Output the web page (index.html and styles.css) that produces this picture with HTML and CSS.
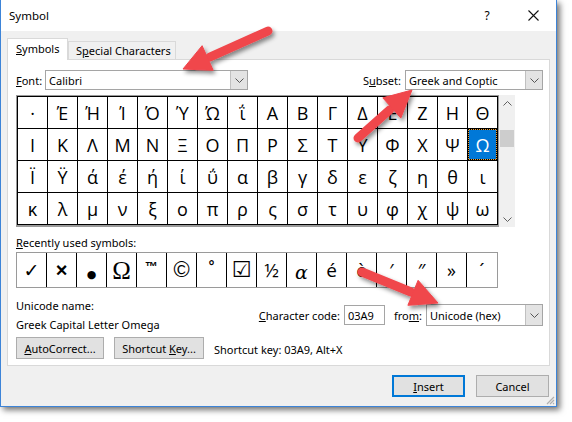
FILE: index.html
```html
<!DOCTYPE html>
<html>
<head>
<meta charset="utf-8">
<title>Symbol</title>
<link rel="stylesheet" href="styles.css">
</head>
<body>
<div class="window">
  <div class="titlebar">
    <span class="title">Symbol</span>
    <span class="tbtn help">?</span>
    <span class="tbtn close"><svg width="11" height="11" viewBox="0 0 11 11"><path d="M0.5 0.5L10.5 10.5M10.5 0.5L0.5 10.5" stroke="#111" stroke-width="1.1" fill="none"/></svg></span>
  </div>
  <div class="client">
    <div class="tabs">
      <div class="tab active"><span><u>S</u>ymbols</span></div>
      <div class="tab inactive"><span>S<u>p</u>ecial Characters</span></div>
    </div>
    <div class="panel">
      <div class="top-row">
        <span class="lbl"><u>F</u>ont:</span>
        <div class="combo font-combo"><span class="val">Calibri</span><span class="drop"><svg width="9" height="5" viewBox="0 0 9 5"><path d="M0.5 0.5L4.5 4.5L8.5 0.5" stroke="#555" fill="none"/></svg></span></div>
        <span class="spacer"></span>
        <span class="lbl">S<u>u</u>bset:</span>
        <div class="combo subset-combo"><span class="val">Greek and Coptic</span><span class="drop"><svg width="9" height="5" viewBox="0 0 9 5"><path d="M0.5 0.5L4.5 4.5L8.5 0.5" stroke="#555" fill="none"/></svg></span></div>
      </div>
      <div class="map-row">
        <div class="charmap">
          <div class="cells">
            <div class="cell">·</div><div class="cell">Έ</div><div class="cell">Ή</div><div class="cell">Ί</div><div class="cell">Ό</div><div class="cell">Ύ</div><div class="cell">Ώ</div><div class="cell">ΐ</div><div class="cell">Α</div><div class="cell">Β</div><div class="cell">Γ</div><div class="cell">Δ</div><div class="cell">Ε</div><div class="cell">Ζ</div><div class="cell">Η</div><div class="cell">Θ</div>
            <div class="cell">Ι</div><div class="cell">Κ</div><div class="cell">Λ</div><div class="cell">Μ</div><div class="cell">Ν</div><div class="cell">Ξ</div><div class="cell">Ο</div><div class="cell">Π</div><div class="cell">Ρ</div><div class="cell">Σ</div><div class="cell">Τ</div><div class="cell">Υ</div><div class="cell">Φ</div><div class="cell">Χ</div><div class="cell">Ψ</div><div class="cell selected">Ω</div>
            <div class="cell">Ϊ</div><div class="cell">Ϋ</div><div class="cell">ά</div><div class="cell">έ</div><div class="cell">ή</div><div class="cell">ί</div><div class="cell">ΰ</div><div class="cell">α</div><div class="cell">β</div><div class="cell">γ</div><div class="cell">δ</div><div class="cell">ε</div><div class="cell">ζ</div><div class="cell">η</div><div class="cell">θ</div><div class="cell">ι</div>
            <div class="cell">κ</div><div class="cell">λ</div><div class="cell">μ</div><div class="cell">ν</div><div class="cell">ξ</div><div class="cell">ο</div><div class="cell">π</div><div class="cell">ρ</div><div class="cell">ς</div><div class="cell">σ</div><div class="cell">τ</div><div class="cell">υ</div><div class="cell">φ</div><div class="cell">χ</div><div class="cell">ψ</div><div class="cell">ω</div>
          </div>
        </div>
        <div class="scrollbar">
          <span class="sb-arrow"><svg width="9" height="5" viewBox="0 0 9 5"><path d="M0.5 4.5L4.5 0.5L8.5 4.5" stroke="#606060" fill="none"/></svg></span>
          <span class="sb-track"><span class="sb-thumb"></span></span>
          <span class="sb-arrow"><svg width="9" height="5" viewBox="0 0 9 5"><path d="M0.5 0.5L4.5 4.5L8.5 0.5" stroke="#606060" fill="none"/></svg></span>
        </div>
      </div>
      <div class="recent-label"><u>R</u>ecently used symbols:</div>
      <div class="recent">
        <div class="rc sym-check">✓</div>
        <div class="rc sym-x">×</div>
        <div class="rc sym-dot">●</div>
        <div class="rc sym-omega">Ω</div>
        <div class="rc sym-tm">™</div>
        <div class="rc sym-copy">©</div>
        <div class="rc sym-deg">°</div>
        <div class="rc sym-box">☑</div>
        <div class="rc sym-half">½</div>
        <div class="rc sym-alpha">α</div>
        <div class="rc sym-e">é</div>
        <div class="rc sym-e">è</div>
        <div class="rc sym-prime">′</div>
        <div class="rc sym-prime">″</div>
        <div class="rc sym-raquo">»</div>
        <div class="rc sym-prime last">´</div>
      </div>
      <div class="info-row">
        <div class="uname">
          <div>Unicode name:</div>
          <div>Greek Capital Letter Omega</div>
        </div>
        <div class="code-group">
          <span class="lbl"><u>C</u>haracter code:</span>
          <div class="textbox">03A9</div>
          <span class="lbl from-lbl">fro<u>m</u>:</span>
          <div class="combo from-combo"><span class="val">Unicode (hex)</span><span class="drop"><svg width="9" height="5" viewBox="0 0 9 5"><path d="M0.5 0.5L4.5 4.5L8.5 0.5" stroke="#555" fill="none"/></svg></span></div>
        </div>
      </div>
      <div class="btn-row">
        <div class="btn auto-btn"><span><u>A</u>utoCorrect...</span></div>
        <div class="btn key-btn"><span>Shortcut <u>K</u>ey...</span></div>
        <span class="shortcut">Shortcut key: 03A9, Alt+X</span>
      </div>
    </div>
    <div class="footer">
      <div class="btn dlg-btn default"><span><u>I</u>nsert</span></div>
      <div class="btn dlg-btn"><span>Cancel</span></div>
    </div>
    <svg class="grip" width="10" height="10" viewBox="0 0 10 10"><path d="M9 2L2 9M9 5L5 9M9 8L8 9" stroke="#b0b0b0" stroke-width="1.2"/></svg>
  </div>
</div>
<svg class="arrows" width="572" height="422" viewBox="0 0 572 422">
  <defs>
    <filter id="sh" x="-20%" y="-20%" width="140%" height="140%">
      <feDropShadow dx="2" dy="3" stdDeviation="2" flood-color="#000" flood-opacity="0.45"/>
    </filter>
  </defs>
  <g filter="url(#sh)" fill="#f0464c" stroke="#f0464c">
    <line x1="268" y1="31" x2="210" y2="57" stroke-width="9" stroke-linecap="round"/>
    <polygon points="183,69 213.2,70.3 202.1,45.7" stroke-width="1" stroke-linejoin="round"/>
    <line x1="358" y1="138" x2="389.5" y2="110" stroke-width="9" stroke-linecap="round"/>
    <polygon points="412,90 400.8,118.05 382.8,97.85" stroke-width="1" stroke-linejoin="round"/>
    <line x1="362" y1="272" x2="411" y2="292" stroke-width="9" stroke-linecap="round"/>
    <polygon points="438,303 407.9,305.3 418.1,280.3" stroke-width="1" stroke-linejoin="round"/>
  </g>
</svg>
</body>
</html>
```

FILE: styles.css
```css
* { box-sizing: border-box; }
html, body { margin: 0; padding: 0; background: #fff; }
body {
  width: 572px;
  height: 422px;
  overflow: hidden;
  position: relative;
  font-family: "Noto Sans", "Open Sans", sans-serif;
  font-size: 11px;
  color: #000;
}
u { text-decoration: underline; text-underline-offset: 1px; }

.window {
  width: 557px;
  height: 407px;
  border: 1px solid #3d84d8;
  border-top: none;
  background: #f0f0f0;
  box-shadow: 3px 3px 6px rgba(0, 0, 0, 0.55);
  display: flex;
  flex-direction: column;
}
.titlebar {
  height: 31px;
  background: #fff;
  display: flex;
  align-items: center;
  flex-shrink: 0;
}
.title { flex: 1; padding-left: 8px; font-size: 11.5px; }
.tbtn {
  width: 46px;
  height: 31px;
  display: flex;
  align-items: center;
  justify-content: center;
}
.help { font-size: 12px; }

.client {
  flex: 1;
  padding: 7px 6px 0 6px;
  display: flex;
  flex-direction: column;
  position: relative;
}
.tabs {
  display: flex;
  align-items: flex-start;
  height: 22px;
  margin-bottom: -1px;
  position: relative;
  z-index: 1;
}
.tab {
  border: 1px solid #d9d9d9;
  border-bottom: none;
  display: flex;
  align-items: center;
  white-space: nowrap;
}
.tab.active {
  width: 61px;
  height: 22px;
  background: #fff;
  padding-left: 8px;
  padding-bottom: 2px;
}
.tab.inactive {
  width: 108px;
  height: 18px;
  margin-top: 3px;
  background: #f0f0f0;
  padding-left: 7px;
}

.panel {
  background: #fff;
  border: 1px solid #d9d9d9;
  padding: 10px 6px 6px 8px;
  display: flex;
  flex-direction: column;
}
.top-row {
  height: 20px;
  display: flex;
  align-items: center;
}
.lbl { white-space: nowrap; }
.spacer { flex: 1; }
.combo {
  height: 20px;
  border: 1px solid #a5a5a5;
  background: #fff;
  display: flex;
  align-items: stretch;
}
.combo .val {
  flex: 1;
  display: flex;
  align-items: center;
  padding-left: 3px;
  white-space: nowrap;
}
.combo .drop {
  width: 17px;
  background: #e3e3e3;
  border-left: 1px solid #c0c0c0;
  display: flex;
  align-items: center;
  justify-content: center;
}
.font-combo { width: 203px; margin-left: 3px; }
.subset-combo { width: 138px; margin-left: 4px; }

.map-row {
  display: flex;
  margin-top: 5px;
}
.charmap {
  border: 1px solid #9a9a9a;
  border-bottom-width: 2px;
}
.cells {
  display: grid;
  grid-template-columns: repeat(16, 29px);
  grid-auto-rows: 31px;
  gap: 1px;
  padding: 1px;
  background: #000;
}
.cell {
  background: #fff;
  display: flex;
  align-items: center;
  justify-content: center;
  font-family: "Open Sans", "Noto Sans", sans-serif;
  font-size: 18px;
  line-height: 1;
}
.cell.selected {
  background: #0078d7;
  color: #fff;
  box-shadow: inset 0 0 0 1px #f0a030;
  outline: 1px dotted #000;
  outline-offset: -1px;
}
.scrollbar {
  width: 16px;
  background: #f0f0f0;
  display: flex;
  flex-direction: column;
}
.sb-arrow {
  height: 16px;
  display: flex;
  align-items: center;
  justify-content: center;
}
.sb-track {
  flex: 1;
  padding: 19px 1px 0 1px;
}
.sb-thumb {
  display: block;
  height: 17px;
  background: #cdcdcd;
}

.recent-label {
  margin-top: 8px;
  height: 16px;
  line-height: 16px;
}
.recent {
  margin-top: 1px;
  width: 482px;
  height: 36px;
  border: 1px solid #9a9a9a;
  display: flex;
}
.rc {
  width: 30px;
  border-right: 1px solid #000;
  display: flex;
  align-items: center;
  justify-content: center;
  font-family: "DejaVu Sans", sans-serif;
  font-size: 18px;
  line-height: 1;
}
.rc.last { border-right: none; flex: 1; }
.sym-check { font-size: 19px; }
.sym-x { font-size: 20px; font-weight: bold; font-family: "Liberation Sans", sans-serif; }
.sym-dot { font-size: 11px; padding-top: 9px; }
.sym-omega { font-family: "Liberation Serif", serif; font-size: 25px; }
.sym-tm { font-size: 13px; font-weight: bold; padding-bottom: 8px; font-family: "Liberation Sans", sans-serif; }
.sym-copy { font-size: 22px; font-family: "Liberation Sans", sans-serif; }
.sym-deg { font-size: 15px; padding-bottom: 9px; font-family: "Liberation Sans", sans-serif; font-weight: bold; }
.sym-box { font-size: 22px; }
.sym-half { font-size: 19px; font-family: "Open Sans", sans-serif; }
.sym-alpha { font-family: "DejaVu Serif", serif; font-style: italic; font-size: 19px; padding-top: 4px; }
.sym-e { font-family: "Open Sans", sans-serif; font-size: 19px; }
.sym-prime { font-family: "Open Sans", sans-serif; font-size: 19px; }
.sym-raquo { font-family: "Open Sans", sans-serif; font-size: 18px; }

.info-row {
  margin-top: 8px;
  height: 38px;
  display: flex;
  align-items: center;
  justify-content: space-between;
}
.uname div { height: 19px; line-height: 19px; }
.code-group {
  display: flex;
  align-items: center;
}
.textbox {
  width: 41px;
  height: 20px;
  border: 1px solid #a5a5a5;
  margin-left: 4px;
  padding-left: 3px;
  display: flex;
  align-items: center;
}
.from-lbl { margin-left: 9px; }
.from-combo { width: 117px; height: 22px; margin-left: 4px; }

.btn-row {
  margin-top: 3px;
  display: flex;
  align-items: center;
}
.btn {
  height: 22px;
  background: #e1e1e1;
  border: 1px solid #adadad;
  display: flex;
  align-items: center;
  justify-content: center;
  white-space: nowrap;
}
.auto-btn { width: 88px; }
.key-btn { width: 90px; margin-left: 10px; }
.shortcut { margin-left: 10px; padding-top: 2px; }

.footer {
  margin-top: 9px;
  display: flex;
  justify-content: flex-end;
  gap: 11px;
  padding-right: 1px;
}
.dlg-btn { width: 73px; }
.dlg-btn.default { border: 2px solid #0078d7; }
.grip {
  position: absolute;
  right: 1px;
  bottom: 1px;
}

.arrows {
  position: absolute;
  left: 0;
  top: 0;
  pointer-events: none;
}
```
